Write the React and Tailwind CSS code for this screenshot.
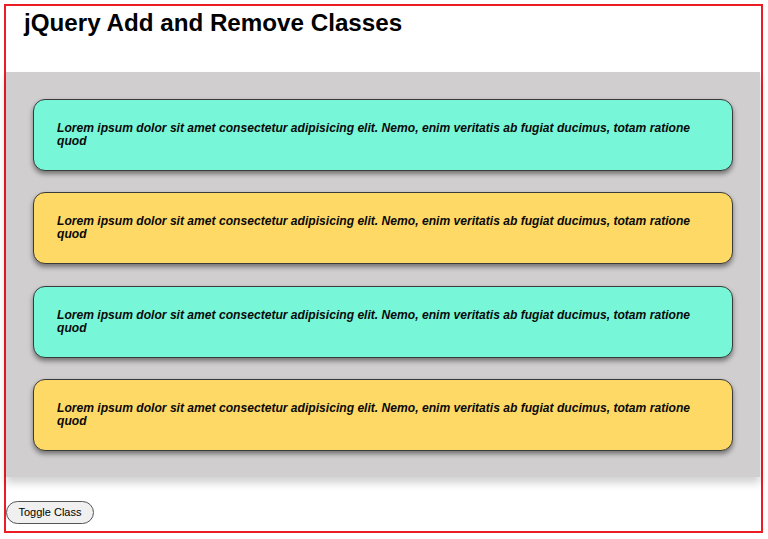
import React from 'react';

const lorem =
  'Lorem ipsum dolor sit amet consectetur adipisicing elit. Nemo, enim veritatis ab fugiat ducimus, totam ratione quod';

const cards = ['bg-[#77f7d8]', 'bg-[#ffd966]', 'bg-[#77f7d8]', 'bg-[#ffd966]'];

export default function App() {
  return (
    <div className="w-[768px] h-[539px] bg-white pt-[4px] pl-[4px] font-['Liberation_Sans',Arial,sans-serif]">
      <div className="w-[759px] h-[529px] border-2 border-[#ec1c24] flex flex-col">
        <div className="h-[66px] pl-[18px] pt-[3px]">
          <h1 className="text-[24.2px] leading-[28px] font-bold text-black">jQuery Add and Remove Classes</h1>
        </div>
        <div className="w-[754px] bg-[#d0cecf] px-[27px] pt-[27px] pb-[26px] flex flex-col gap-[21.3px] shadow-[0_6px_8px_rgba(0,0,0,0.18)]">
          {cards.map((bg, i) => (
            <div
              key={i}
              className={`${bg} h-[72px] rounded-[12px] border border-[#3a3a3a] pl-[23px] pr-[16px] pt-[22px] shadow-[0_3px_5px_rgba(0,0,0,0.45)]`}
            >
              <p className="text-[12.1px] leading-[13px] font-bold italic text-[#0a0a0a]">{lorem}</p>
            </div>
          ))}
        </div>
        <div className="pt-[22px]">
          <button className="h-[23px] w-[88px] rounded-full border border-[#555] bg-[#f0f0f0] text-[11px] text-black">
            Toggle Class
          </button>
        </div>
      </div>
    </div>
  );
}
